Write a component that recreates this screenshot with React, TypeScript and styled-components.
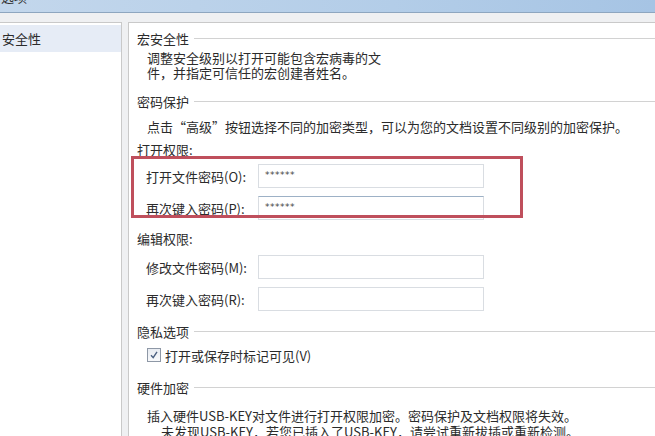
import React from 'react';
import styled, { createGlobalStyle } from 'styled-components';

const GlobalStyle = createGlobalStyle`
    html, body {
        margin: 0;
        padding: 0;
        background: #eff0f2;
    }
    body {
        font-family: "Noto Sans CJK SC", "Liberation Sans", sans-serif;
        font-size: 13px;
        color: #2b2b2b;
    }
`

const Window = styled.div`
    width: 655px;
    height: 436px;
    overflow: hidden;
    display: flex;
    flex-direction: column;
    background: #eff0f2;
`

const TitleBar = styled.div`
    height: 12px;
    flex-shrink: 0;
    display: flex;
    align-items: flex-end;
    overflow: hidden;
    background: linear-gradient(to right, #c3d7ec, #b3cde8 60%, #a6c4e4);
    border-bottom: 1px solid #8ea6bf;
    .title {
        font-size: 13px;
        line-height: 13px;
        margin-bottom: 9px;
        padding-left: 1px;
        color: #333;
    }
`

const Body = styled.div`
    flex: 1;
    display: flex;
    gap: 6px;
    padding-top: 9px;
    min-height: 0;
`

const Sidebar = styled.ul`
    width: 121px;
    flex-shrink: 0;
    margin: 0;
    padding: 2px 0 0;
    list-style: none;
    background: #fff;
    border-top: 1px solid #c9c9c9;
    border-right: 1px solid #c9c9c9;
`

const NavItem = styled.li<{ $active?: boolean }>`
    height: 27px;
    line-height: 27px;
    padding-left: 2px;
    background: ${p => (p.$active ? '#e6ecf6' : 'transparent')};
`

const Content = styled.div`
    flex: 1;
    background: #fff;
    border-top: 1px solid #c9c9c9;
    border-left: 1px solid #c9c9c9;
    padding: 6px 0 0 8px;
    overflow: hidden;
`

const Heading = styled.div<{ $mt?: number }>`
    display: flex;
    align-items: center;
    gap: 5px;
    height: 18px;
    margin-top: ${p => p.$mt ?? 0}px;
    &::after {
        content: '';
        flex: 1;
        border-top: 1px solid #d2d2d2;
        margin-top: 1px;
    }
`

const Desc = styled.p<{ $mt?: number; $indent?: number }>`
    margin: ${p => p.$mt ?? 0}px 0 0 ${p => p.$indent ?? 10}px;
    line-height: 15px;
    width: 250px;
    &.wide {
        width: auto;
        white-space: nowrap;
        line-height: 16px;
    }
`

const SubTitle = styled.div<{ $mt?: number }>`
    height: 16px;
    line-height: 16px;
    margin-top: ${p => p.$mt ?? 0}px;
`

const FieldGroup = styled.div<{ $mt?: number }>`
    position: relative;
    display: flex;
    flex-direction: column;
    gap: 8px;
    margin-top: ${p => p.$mt ?? 6}px;
`

const Highlight = styled.div`
    position: absolute;
    left: -6px;
    top: -8px;
    width: 386px;
    height: 56px;
    border: 3px solid #bf4f5c;
    pointer-events: none;
`

const Row = styled.div`
    display: flex;
    align-items: center;
    padding-left: 9px;
    height: 24px;
    label {
        width: 112px;
        white-space: nowrap;
    }
`

const Input = styled.div<{ $focus?: boolean }>`
    width: 218px;
    height: 22px;
    border: 1px solid #d9dde2;
    border-top-color: ${p => (p.$focus ? '#9db1c6' : '#d9dde2')};
    background: #fff;
    font-family: "DejaVu Sans", sans-serif;
    font-size: 9px;
    line-height: 20px;
    padding-left: 6px;
    letter-spacing: 0.5px;
    color: #444;
    box-sizing: content-box;
`

const CheckRow = styled.div`
    display: flex;
    align-items: center;
    gap: 4px;
    margin: 7px 0 0 10px;
    height: 16px;
`

const CheckBox = styled.span`
    width: 12px;
    height: 12px;
    border: 1px solid #8e98a6;
    background: linear-gradient(#e8ecf2, #f8f9fb);
    display: flex;
    align-items: center;
    justify-content: center;
`

const Mark = () => (
    <svg width="10" height="10" viewBox="0 0 10 10">
        <path d="M2 5.2 L4.2 7.6 L8 1.8" fill="none" stroke="#4a5f80" strokeWidth="1.4" />
    </svg>
)

export default function App() {
    return (
        <Window>
            <GlobalStyle />
            <TitleBar>
                <span className='title'>选项</span>
            </TitleBar>
            <Body>
                <Sidebar>
                    <NavItem $active>安全性</NavItem>
                </Sidebar>
                <Content>
                    <Heading>宏安全性</Heading>
                    <Desc $mt={3}>调整安全级别以打开可能包含宏病毒的文件，并指定可信任的宏创建者姓名。</Desc>

                    <Heading $mt={12}>密码保护</Heading>
                    <Desc className='wide' $mt={9}>点击“高级”按钮选择不同的加密类型，可以为您的文档设置不同级别的加密保护。</Desc>

                    <SubTitle $mt={7}>打开权限:</SubTitle>
                    <FieldGroup>
                        <Row>
                            <label>打开文件密码(O):</label>
                            <Input>******</Input>
                        </Row>
                        <Row>
                            <label>再次键入密码(P):</label>
                            <Input $focus>******</Input>
                        </Row>
                        <Highlight />
                    </FieldGroup>

                    <SubTitle $mt={11}>编辑权限:</SubTitle>
                    <FieldGroup $mt={8}>
                        <Row>
                            <label>修改文件密码(M):</label>
                            <Input />
                        </Row>
                        <Row>
                            <label>再次键入密码(R):</label>
                            <Input />
                        </Row>
                    </FieldGroup>

                    <Heading $mt={11}>隐私选项</Heading>
                    <CheckRow>
                        <CheckBox><Mark /></CheckBox>
                        <span>打开或保存时标记可见(V)</span>
                    </CheckRow>

                    <Heading $mt={15}>硬件加密</Heading>
                    <Desc className='wide' $mt={12}>插入硬件USB-KEY对文件进行打开权限加密。密码保护及文档权限将失效。</Desc>
                    <Desc className='wide' $indent={24}>未发现USB-KEY，若您已插入了USB-KEY，请尝试重新拔插或重新检测。</Desc>
                </Content>
            </Body>
        </Window>
    )
}
